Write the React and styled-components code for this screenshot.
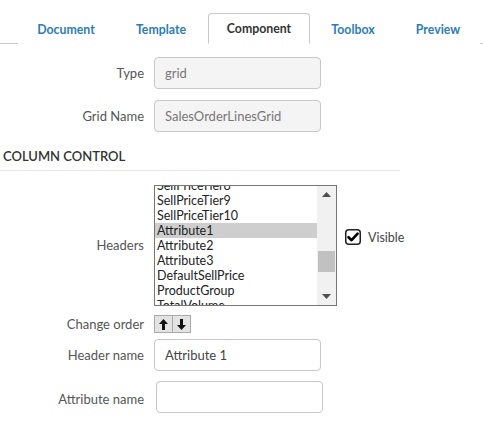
import React from "react";
import styled, { createGlobalStyle } from "styled-components";

const GlobalStyle = createGlobalStyle`
    body {
        margin: 0;
        background: #fff;
        font-family: Lato, "Open Sans", sans-serif;
        font-size: 13px;
        color: #555;
    }
`;

const Page = styled.div`
    width: 483px;
    height: 422px;
    overflow: hidden;
`;

const TabBar = styled.ul`
    display: flex;
    align-items: flex-end;
    height: 44px;
    margin: 0;
    padding: 0 0 0 18px;
    list-style: none;
    border-bottom: 1px solid #c8c8c8;
    box-sizing: border-box;
`;

const Tab = styled.li`
    width: ${(p) => p.width}px;
    flex: none;
    text-align: center;
    height: ${(p) => (p.active ? "31px" : "30px")};
    line-height: 30px;
    margin-bottom: -1px;
    font-size: 12.3px;
    font-weight: 700;
    color: ${(p) => (p.active ? "#333" : "#2c7db5")};
    background: #fff;
    border: 1px solid ${(p) => (p.active ? "#c8c8c8" : "transparent")};
    border-bottom-color: ${(p) => (p.active ? "#fff" : "transparent")};
    border-radius: 4px 4px 0 0;
    box-sizing: border-box;
`;

const Form = styled.div`
    display: flex;
    flex-direction: column;
    padding-top: 13px;
`;

const Row = styled.div`
    display: flex;
    align-items: ${(p) => p.align || "center"};
    gap: 10px;
    margin-bottom: ${(p) => p.gap ?? 11}px;
`;

const Label = styled.label`
    width: 144px;
    flex: none;
    text-align: right;
    color: #555;
    margin-top: ${(p) => p.lift || 0}px;
`;

const Input = styled.div`
    width: 167px;
    height: 32px;
    box-sizing: border-box;
    border: 1px solid #c8c8c8;
    border-radius: 4px;
    background: ${(p) => (p.disabled ? "#f4f4f4" : "#fff")};
    color: ${(p) => (p.disabled ? "#777" : "#444")};
    padding: 0 10px;
    line-height: 30px;
    margin-left: ${(p) => p.shift || 0}px;
`;

const Section = styled.div`
    padding: 8px 0 6px 3px;
    font-weight: 600;
    color: #333;
    width: 397px;
    border-bottom: 1px solid #e6e6e6;
    margin-bottom: 14px;
`;

const ListBox = styled.div`
    display: flex;
    width: 183px;
    height: 121px;
    box-sizing: border-box;
    border: 1px solid #767676;
    overflow: hidden;
`;

const ListItems = styled.div`
    flex: 1;
    overflow: hidden;
`;

const ListScroll = styled.div`
    margin-top: -8px;
`;

const Item = styled.div`
    height: 15px;
    line-height: 15px;
    padding-left: 2px;
    color: #222;
    font-size: 12.5px;
    white-space: nowrap;
    background: ${(p) => (p.selected ? "#cecece" : "transparent")};
`;

const ScrollBar = styled.div`
    width: 19px;
    flex: none;
    background: #f1f1f1;
    position: relative;
    display: flex;
    flex-direction: column;
    justify-content: space-between;
    align-items: center;
    padding: 6px 0;
    box-sizing: border-box;
`;

const Thumb = styled.div`
    position: absolute;
    left: 1px;
    right: 1px;
    top: 65px;
    height: 21px;
    background: #c1c1c1;
`;

const Check = styled.div`
    display: flex;
    align-items: center;
    gap: 7px;
    margin-top: 44px;
    margin-left: -2px;
    color: #444;
    font-size: 12.5px;
`;

const Buttons = styled.div`
    display: flex;
    gap: 1px;
    border: 1px solid #aaa;
    background: #aaa;
`;

const OrderButton = styled.div`
    width: 17px;
    height: 16px;
    background: #e3e3e3;
    display: flex;
    align-items: center;
    justify-content: center;
`;

const items = [
    "SellPriceTier8",
    "SellPriceTier9",
    "SellPriceTier10",
    "Attribute1",
    "Attribute2",
    "Attribute3",
    "DefaultSellPrice",
    "ProductGroup",
    "TotalVolume",
];

const tabs = [
    { name: "Document", width: 96 },
    { name: "Template", width: 94 },
    { name: "Component", width: 102 },
    { name: "Toolbox", width: 86 },
    { name: "Preview", width: 84 },
];

const App = () => {
    return (
        <Page>
            <GlobalStyle />
            <TabBar>
                {tabs.map((t) => (
                    <Tab key={t.name} width={t.width} active={t.name === "Component"}>{t.name}</Tab>
                ))}
            </TabBar>
            <Form>
                <Row>
                    <Label>Type</Label>
                    <Input disabled>grid</Input>
                </Row>
                <Row gap={8}>
                    <Label>Grid Name</Label>
                    <Input disabled>SalesOrderLinesGrid</Input>
                </Row>
                <Section>COLUMN CONTROL</Section>
                <Row align="flex-start" gap={9}>
                    <Label lift={52}>Headers</Label>
                    <ListBox>
                        <ListItems>
                            <ListScroll>
                                {items.map((i) => (
                                    <Item key={i} selected={i === "Attribute1"}>{i}</Item>
                                ))}
                            </ListScroll>
                        </ListItems>
                        <ScrollBar>
                            <svg width="9" height="5" viewBox="0 0 9 5">
                                <path d="M0 5 L4.5 0 L9 5 Z" fill="#505050" />
                            </svg>
                            <Thumb />
                            <svg width="9" height="5" viewBox="0 0 9 5">
                                <path d="M0 0 L4.5 5 L9 0 Z" fill="#505050" />
                            </svg>
                        </ScrollBar>
                    </ListBox>
                    <Check>
                        <svg width="16" height="16" viewBox="0 0 16 16">
                            <rect x="0.75" y="0.75" width="14.5" height="14.5" rx="3" fill="#fff" stroke="#222" strokeWidth="1.5" />
                            <path d="M3.5 8.2 L6.6 11.2 L12.6 4.6" fill="none" stroke="#000" strokeWidth="2.6" strokeLinecap="round" strokeLinejoin="round" />
                        </svg>
                        Visible
                    </Check>
                </Row>
                <Row gap={6}>
                    <Label>Change order</Label>
                    <Buttons>
                        <OrderButton>
                            <svg width="9" height="11" viewBox="0 0 9 11">
                                <path d="M4.5 0 L9 5 L6 5 L6 11 L3 11 L3 5 L0 5 Z" fill="#111" />
                            </svg>
                        </OrderButton>
                        <OrderButton>
                            <svg width="9" height="11" viewBox="0 0 9 11">
                                <path d="M4.5 11 L9 6 L6 6 L6 0 L3 0 L3 6 L0 6 Z" fill="#111" />
                            </svg>
                        </OrderButton>
                    </Buttons>
                </Row>
                <Row gap={10}>
                    <Label>Header name</Label>
                    <Input>Attribute 1</Input>
                </Row>
                <Row>
                    <Label lift={3}>Attribute name</Label>
                    <Input shift={2}></Input>
                </Row>
            </Form>
        </Page>
    );
};

export default App;
